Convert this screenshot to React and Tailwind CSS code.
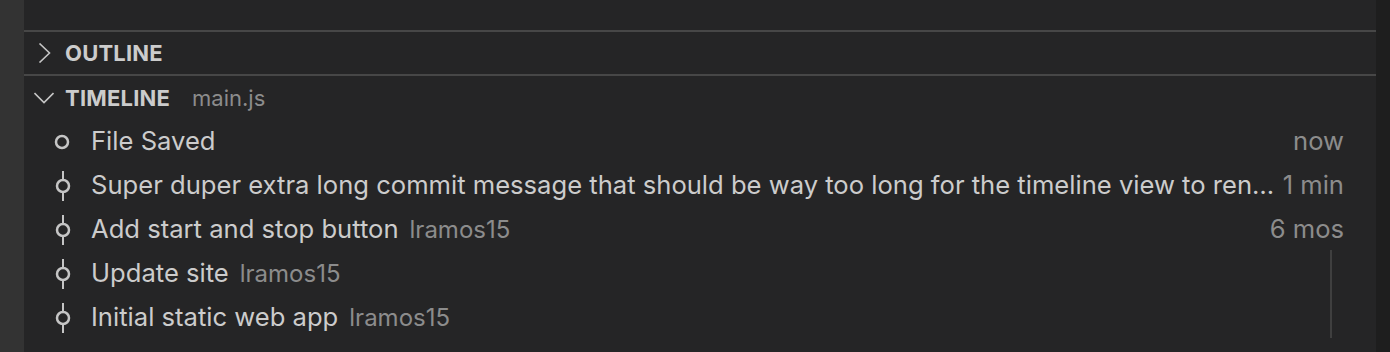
import React from 'react';

const items = [
  { label: 'File Saved', desc: '', time: 'now', icon: 'saved' },
  { label: 'Super duper extra long commit message that should be way too long for the timeline view to render in full', desc: '', time: '1 min', icon: 'commit' },
  { label: 'Add start and stop button', desc: 'lramos15', time: '6 mos', icon: 'commit' },
  { label: 'Update site', desc: 'lramos15', time: '', icon: 'commit' },
  { label: 'Initial static web app', desc: 'lramos15', time: '', icon: 'commit' },
];

const ItemIcon = ({ type }) =>
  type === 'saved' ? (
    <svg width="30" height="44" viewBox="0 0 30 44" className="shrink-0">
      <circle cx="15" cy="22" r="6" fill="none" stroke="#c5c5c5" strokeWidth="2.5" />
    </svg>
  ) : (
    <svg width="30" height="44" viewBox="0 0 30 44" className="shrink-0">
      <line x1="16" y1="7" x2="16" y2="15.5" stroke="#c5c5c5" strokeWidth="2" />
      <line x1="16" y1="28.5" x2="16" y2="37" stroke="#c5c5c5" strokeWidth="2" />
      <circle cx="16" cy="22" r="6" fill="none" stroke="#c5c5c5" strokeWidth="2.5" />
    </svg>
  );

const Chevron = ({ open }) => (
  <svg width="20" height="20" viewBox="0 0 20 20" className="shrink-0">
    {open ? (
      <path d="M0.5 5 L10 14.5 L19.5 5" fill="none" stroke="#c5c5c5" strokeWidth="1.6" />
    ) : (
      <path d="M5.5 0.5 L15.5 10 L5.5 19.5" fill="none" stroke="#c5c5c5" strokeWidth="1.6" />
    )}
  </svg>
);

export default function App() {
  return (
    <div className="flex h-[352px] w-[1390px] overflow-hidden bg-[#252526] font-['Inter',sans-serif]">
      <div className="w-[24px] shrink-0 bg-[#333333]" />

      <div className="flex min-w-0 flex-1 flex-col">
        <div className="h-[30px] shrink-0" />

        {/* Outline header */}
        <div className="flex h-[44px] shrink-0 items-center border-t-2 border-[#474747] pl-[10px]">
          <Chevron open={false} />
          <span className="ml-[11px] text-[22px] font-bold tracking-[0.2px] text-[#cccccc]">OUTLINE</span>
        </div>

        {/* Timeline header */}
        <div className="flex h-[46px] shrink-0 items-center border-t-2 border-[#474747] pl-[10px]">
          <Chevron open />
          <span className="ml-[11px] text-[22px] font-bold tracking-[0.2px] text-[#cccccc]">TIMELINE</span>
          <span className="ml-[22px] text-[22px] text-[#8c8c8c]">main.js</span>
        </div>

        <div className="relative flex flex-col">
          {items.map((it, i) => (
            <div key={i} className="flex h-[44px] items-center pl-[23px] pr-[32px]">
              <ItemIcon type={it.icon} />
              <div className="ml-[14px] -mt-[2px] flex min-w-0 flex-1 items-baseline">
                <span className="truncate text-[25.6px] text-[#cccccc]">{it.label}</span>
                {it.desc && <span className="ml-[11px] shrink-0 text-[24px] text-[#8c8c8c]">{it.desc}</span>}
              </div>
              {it.time && <span className="ml-[8px] -mt-[2px] shrink-0 text-[25.6px] text-[#8c8c8c]">{it.time}</span>}
            </div>
          ))}
          <div className="absolute right-[44px] top-[130px] h-[88px] w-[2px] bg-[#3f3f3f]" />
        </div>
      </div>

      <div className="w-[14px] shrink-0 bg-[#1e1e1e]" />
    </div>
  );
}
